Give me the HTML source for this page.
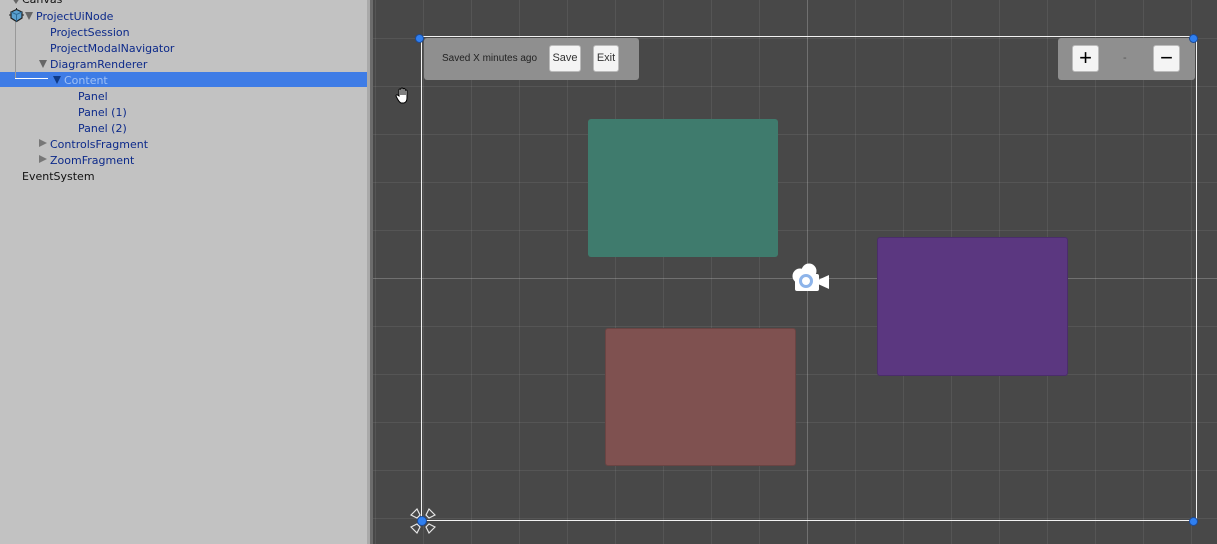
<!DOCTYPE html>
<html><head><meta charset="utf-8"><style>
*{margin:0;padding:0;box-sizing:border-box}
body{width:1217px;height:544px;overflow:hidden;position:relative;font-family:"Liberation Sans","DejaVu Sans",sans-serif;background:#484848}
#left{position:absolute;left:0;top:0;width:367px;height:544px;background:#c2c2c2}
.it{position:absolute;color:#0d2a8a;line-height:16px;height:16px;font-family:"DejaVu Sans",sans-serif;font-size:11px}
.tri{position:absolute;width:0;height:0}
.sel{position:absolute;left:0;top:72px;width:367px;height:15px;background:#3e7ce6}
#split1{position:absolute;left:367px;top:0;width:3px;height:544px;background:#a9a9a9}
#split2{position:absolute;left:370px;top:0;width:3px;height:544px;background:#6c6c6c}
#scene{position:absolute;left:373px;top:0;width:844px;height:544px;background:#484848;
background-image:linear-gradient(to right,rgba(255,255,255,0.07) 1px,transparent 1px),linear-gradient(to bottom,rgba(255,255,255,0.07) 1px,transparent 1px);
background-size:48px 48px;background-position:2px 38px}
.ax{position:absolute;background:rgba(255,255,255,0.16)}
.btn{position:absolute;background:#f4f4f4;border:1px solid #bbb;border-radius:3px;font-size:11px;color:#333;text-align:center}
</style></head><body>
<div id="left">
<div class="sel"></div>
<div class="tri" style="left:12px;top:-2px;border-left:4px solid transparent;border-right:4px solid transparent;border-top:6px solid #666"></div>
<div class="it" style="left:22px;top:-8px;color:#111">Canvas</div>
<svg style="position:absolute;left:8px;top:8px" width="17" height="15" viewBox="0 0 17 15"><path d="M1 7 L3 7 M14 7 L16 7 M8.5 1 L8.5 0" stroke="#222" stroke-width="1"/><path d="M3 4 L8.5 1.5 L14 4 L14 10 L8.5 13.5 L3 10 Z" fill="#5aa0d0" stroke="#222" stroke-width="1.2"/><path d="M3 4 L8.5 6.5 L14 4 M8.5 6.5 L8.5 13.5" stroke="#2d6a95" fill="none"/></svg>
<div class="tri" style="left:25px;top:12px;border-left:4.5px solid transparent;border-right:4.5px solid transparent;border-top:8px solid #666"></div>
<div class="it" style="left:36px;top:9px">ProjectUiNode</div>
<div class="it" style="left:50px;top:25px">ProjectSession</div>
<div class="it" style="left:50px;top:41px">ProjectModalNavigator</div>
<div class="tri" style="left:39px;top:60px;border-left:4.5px solid transparent;border-right:4.5px solid transparent;border-top:8px solid #666"></div>
<div class="it" style="left:50px;top:57px">DiagramRenderer</div>
<div style="position:absolute;left:15px;top:22px;width:1px;height:57px;background:#999"></div>
<div style="position:absolute;left:15px;top:78px;width:33px;height:1px;background:#fff"></div>
<div class="tri" style="left:53px;top:76px;border-left:4.5px solid transparent;border-right:4.5px solid transparent;border-top:8px solid #0e3a86"></div>
<div class="it" style="left:64px;top:73px;color:#9fc0f5">Content</div>
<div class="it" style="left:78px;top:89px">Panel</div>
<div class="it" style="left:78px;top:105px">Panel (1)</div>
<div class="it" style="left:78px;top:121px">Panel (2)</div>
<div class="tri" style="left:39px;top:139px;border-top:4.5px solid transparent;border-bottom:4.5px solid transparent;border-left:8px solid #777"></div>
<div class="it" style="left:50px;top:137px">ControlsFragment</div>
<div class="tri" style="left:39px;top:155px;border-top:4.5px solid transparent;border-bottom:4.5px solid transparent;border-left:8px solid #777"></div>
<div class="it" style="left:50px;top:153px">ZoomFragment</div>
<div class="it" style="left:22px;top:169px;color:#111">EventSystem</div>
</div>
<div id="split1"></div><div id="split2"></div>
<div id="scene">
<div class="ax" style="left:0;top:278px;width:844px;height:1px"></div>
<div class="ax" style="left:434px;top:0;width:1px;height:544px"></div>
<div style="position:absolute;left:215px;top:119px;width:190px;height:138px;background:#3f7b6d;border-radius:3px"></div>
<div style="position:absolute;left:504px;top:237px;width:191px;height:139px;background:#5b3780;border-radius:3px;border:1px solid #4a2d6a"></div>
<div style="position:absolute;left:232px;top:328px;width:191px;height:138px;background:#7f5150;border-radius:3px;border:1px solid #6a4443"></div>
<div style="position:absolute;left:48px;top:36px;width:776px;height:485px;border:1px solid #f2f2f2"></div>
<div style="position:absolute;left:51px;top:38px;width:215px;height:42px;background:#8f8f8f;border-radius:3px"></div>
<div style="position:absolute;left:69px;top:53px;font-size:10px;color:#222">Saved X minutes ago</div>
<div class="btn" style="left:176px;top:45px;width:32px;height:27px;line-height:25px">Save</div>
<div class="btn" style="left:220px;top:45px;width:26px;height:27px;line-height:25px">Exit</div>
<div style="position:absolute;left:685px;top:38px;width:137px;height:42px;background:#8f8f8f;border-radius:3px"></div>
<div class="btn" style="left:699px;top:45px;width:27px;height:27px;line-height:24px;font-size:22px;color:#000">+</div>
<div style="position:absolute;left:750px;top:52px;font-size:11px;color:#555">-</div>
<div class="btn" style="left:780px;top:45px;width:27px;height:27px;line-height:24px;font-size:22px;color:#000">−</div>
<div style="position:absolute;left:42px;top:34px;width:9px;height:9px;border-radius:50%;background:#2f7ff0;border:1px solid #1a4a99"></div>
<div style="position:absolute;left:816px;top:34px;width:9px;height:9px;border-radius:50%;background:#2f7ff0;border:1px solid #1a4a99"></div>
<div style="position:absolute;left:816px;top:517px;width:9px;height:9px;border-radius:50%;background:#2f7ff0;border:1px solid #1a4a99"></div>
<svg style="position:absolute;left:36px;top:507px" width="28" height="28" viewBox="0 0 28 28"><g fill="none" stroke="#e6e6e6" stroke-width="1.2"><path d="M2 8 L8 2 L11 8 L8 11 Z"/><path d="M26 8 L20 2 L17 8 L20 11 Z"/><path d="M2 20 L8 26 L11 20 L8 17 Z"/><path d="M26 20 L20 26 L17 20 L20 17 Z"/></g></svg>
<div style="position:absolute;left:44px;top:516px;width:10px;height:10px;border-radius:50%;background:#2f7ff0;border:1px solid #1a4a99"></div>
<svg style="position:absolute;left:22px;top:87px" width="16" height="18" viewBox="0 0 16 18"><path d="M4 9 L4 3 Q4 2 5 2 Q6 2 6 3 L6 8 L6 2 Q6 1 7 1 Q8 1 8 2 L8 8 L8 2.5 Q8 1.5 9 1.5 Q10 1.5 10 2.5 L10 8 L10 4 Q10 3 11 3 Q12 3 12 4 L12 11 Q12 15 9 16 L6 16 Q4 15 2 11 L1 9 Q1 7.5 2.5 8 Z" fill="#fff" stroke="#000" stroke-width="1"/></svg>
<svg style="position:absolute;left:415px;top:261px" width="44" height="34" viewBox="0 0 44 34"><circle cx="12" cy="15" r="7.5" fill="#fff"/><circle cx="21" cy="10" r="7.5" fill="#fff"/><rect x="7" y="13" width="24" height="17" rx="2" fill="#fff"/><path d="M30 19 L41 14 L41 28 L30 23 Z" fill="#fff"/><circle cx="18" cy="20" r="5.5" fill="none" stroke="#8db4ea" stroke-width="3"/></svg>
</div>
</body></html>
